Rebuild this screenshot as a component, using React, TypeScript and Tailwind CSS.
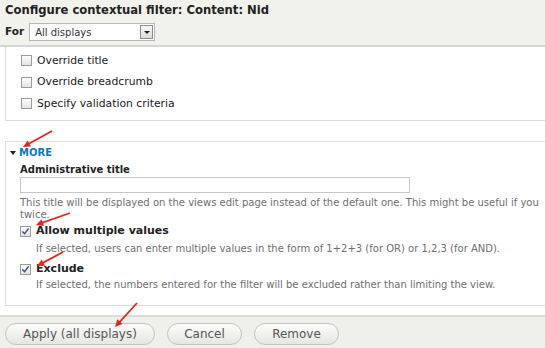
const font = { fontFamily: '"DejaVu Sans", Verdana, sans-serif' };

function Check({ checked }: { checked?: boolean }) {
  return (
    <span className="inline-flex h-[11px] w-[11px] shrink-0 items-center justify-center border border-[#9a9a9a] bg-gradient-to-b from-[#fdfdfd] to-[#e4e4e4]">
      {checked && (
        <svg viewBox="0 0 10 10" className="h-[9px] w-[9px]">
          <path d="M1.5 5 L4 7.5 L8.5 1.5" fill="none" stroke="#3a4a8a" strokeWidth="1.6" />
        </svg>
      )}
    </span>
  );
}

function Arrow({ x1, y1, x2, y2 }: { x1: number; y1: number; x2: number; y2: number }) {
  const a = Math.atan2(y2 - y1, x2 - x1);
  const l = 8;
  const w = 0.45;
  const p1 = [x2 - l * Math.cos(a - w), y2 - l * Math.sin(a - w)];
  const p2 = [x2 - l * Math.cos(a + w), y2 - l * Math.sin(a + w)];
  return (
    <g>
      <line x1={x1} y1={y1} x2={x2 - 4 * Math.cos(a)} y2={y2 - 4 * Math.sin(a)} stroke="#e5261e" strokeWidth="1.8" />
      <polygon points={`${x2},${y2} ${p1[0]},${p1[1]} ${p2[0]},${p2[1]}`} fill="#e5261e" />
    </g>
  );
}

export default function App() {
  return (
    <div className="relative h-[348px] w-[545px] overflow-hidden bg-white text-[#333]" style={font}>
      <div className="h-[47px] border-b-2 border-[#d5d5d1] bg-[#f2f2ed] px-[5px] pt-[1px]">
        <h1 className="text-[11.6px] font-bold leading-[18px] text-[#222]">Configure contextual filter: Content: Nid</h1>
        <div className="mt-[4px] flex items-center gap-[5px]">
          <span className="text-[10.5px] font-bold text-[#222]">For</span>
          <div className="flex h-[18px] w-[126px] items-center border border-[#b8b8b8] bg-white">
            <span className="flex-1 pl-[5px] text-[10px] text-[#333]">All displays</span>
            <span className="mr-[1px] flex h-[14px] w-[13px] items-center justify-center border border-[#8c8c8c] bg-gradient-to-b from-[#f8f8f8] to-[#dcdcdc]">
              <span className="h-0 w-0 border-x-[3px] border-t-[3px] border-x-transparent border-t-[#222]" />
            </span>
          </div>
        </div>
      </div>

      <div className="ml-[5px] h-[74px] border-b border-l border-[#dcdcdc] pl-[15px] pt-[3px]">
        {['Override title', 'Override breadcrumb', 'Specify validation criteria'].map((t) => (
          <div key={t} className="flex h-[21.5px] items-center gap-[5px]">
            <Check />
            <span className="text-[10.8px] text-[#222]">{t}</span>
          </div>
        ))}
      </div>

      <div className="ml-[5px] mt-[20px] h-[165px] border-y border-l border-[#dcdcdc] pl-[4px] pt-[5px]">
        <div className="flex h-[12px] items-center gap-[3px]">
          <span className="h-0 w-0 border-x-[3px] border-t-[4px] border-x-transparent border-t-[#222]" />
          <span className="text-[10px] font-bold leading-[12px] text-[#0a78c0]">MORE</span>
        </div>
        <div className="pl-[10px]">
          <div className="mt-[4px] text-[10px] font-bold leading-[13px] text-[#222]">Administrative title</div>
          <div className="mt-[1px] h-[16px] w-[390px] border border-[#c8c8c8] bg-white" />
          <p className="mt-[4px] text-[10px] leading-[12px] text-[#6e6e6e]">
            This title will be displayed on the views edit page instead of the default one. This might be useful if you twice.
          </p>
          <div className="mt-[4px] flex h-[12px] items-center gap-[5px]">
            <Check checked />
            <span className="text-[11px] font-bold text-[#222]">Allow multiple values</span>
          </div>
          <p className="mt-[6px] pl-[16px] text-[10px] leading-[12px] text-[#6e6e6e]">
            If selected, users can enter multiple values in the form of 1+2+3 (for OR) or 1,2,3 (for AND).
          </p>
          <div className="mt-[8px] flex h-[12px] items-center gap-[5px]">
            <Check checked />
            <span className="text-[11px] font-bold text-[#222]">Exclude</span>
          </div>
          <p className="mt-[4px] pl-[16px] text-[10px] leading-[12px] text-[#6e6e6e]">
            If selected, the numbers entered for the filter will be excluded rather than limiting the view.
          </p>
        </div>
      </div>

      <div className="mt-[9px] flex h-[40px] gap-[12px] border-t-2 border-[#dcdcd8] bg-[#f0f0ea] px-[5px] pt-[6px]">
        {[
          ['Apply (all displays)', 'w-[150px]'],
          ['Cancel', 'w-[75px]'],
          ['Remove', 'w-[85px]'],
        ].map(([t, w]) => (
          <button
            key={t}
            className={`${w} h-[22px] rounded-full border border-[#c4c4c0] bg-gradient-to-b from-[#fcfcfa] to-[#e6e6e2] text-[12px] text-[#555]`}
          >
            {t}
          </button>
        ))}
      </div>

      <svg className="pointer-events-none absolute left-0 top-0" width="545" height="348">
        <Arrow x1={52} y1={131} x2={23} y2={147} />
        <Arrow x1={70} y1={213} x2={36} y2={225} />
        <Arrow x1={63} y1={252} x2={37} y2={266} />
        <Arrow x1={137} y1={303} x2={115} y2={327} />
      </svg>
    </div>
  );
}
